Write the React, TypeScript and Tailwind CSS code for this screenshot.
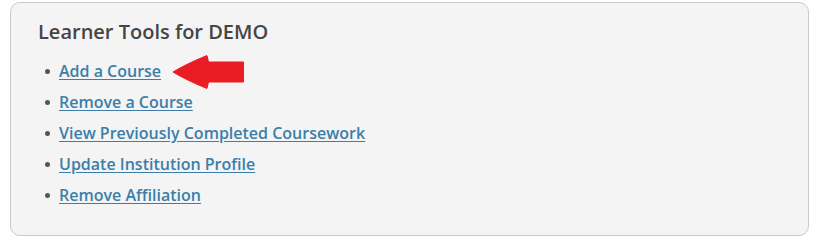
import React from "react";

const links = [
  "Add a Course",
  "Remove a Course",
  "View Previously Completed Coursework",
  "Update Institution Profile",
  "Remove Affiliation",
];

// Red pointer arrow drawn next to the first link
function Arrow() {
  return (
    <svg width="72" height="34" viewBox="0 0 72 34" className="ml-[11px] shrink-0">
      <path
        d="M1 17 Q14 9 35 0.5 L36.5 7 L71.5 7 L71.5 27 L36.5 27 L35 33.5 Q14 25 1 17 Z"
        fill="#ea1d25"
        stroke="#ea1d25"
        strokeWidth="1"
        strokeLinejoin="round"
      />
    </svg>
  );
}

export default function App() {
  return (
    <div className="w-[819px] h-[241px] bg-white pt-[2px] pl-[10px] font-['Open_Sans',sans-serif]">
      <section className="w-[799px] h-[234px] rounded-[10px] border border-[#c9c9c9] bg-[#f4f4f4] pl-[27px] pt-[17px]">
        <h2 className="text-[20px] leading-[24px] font-semibold text-[#454545]">Learner Tools for DEMO</h2>
        <ul className="mt-[12px]">
          {links.map((label, i) => (
            <li key={label} className="flex items-center h-[31px] leading-[31px]">
              <span className="ml-[7px] mr-[9px] w-[5px] h-[5px] rounded-full bg-[#555]" />
              <a href="#" className="text-[16px] font-semibold text-[#3b7eaa] underline underline-offset-2">
                {label}
              </a>
              {i === 0 && <Arrow />}
            </li>
          ))}
        </ul>
      </section>
    </div>
  );
}
